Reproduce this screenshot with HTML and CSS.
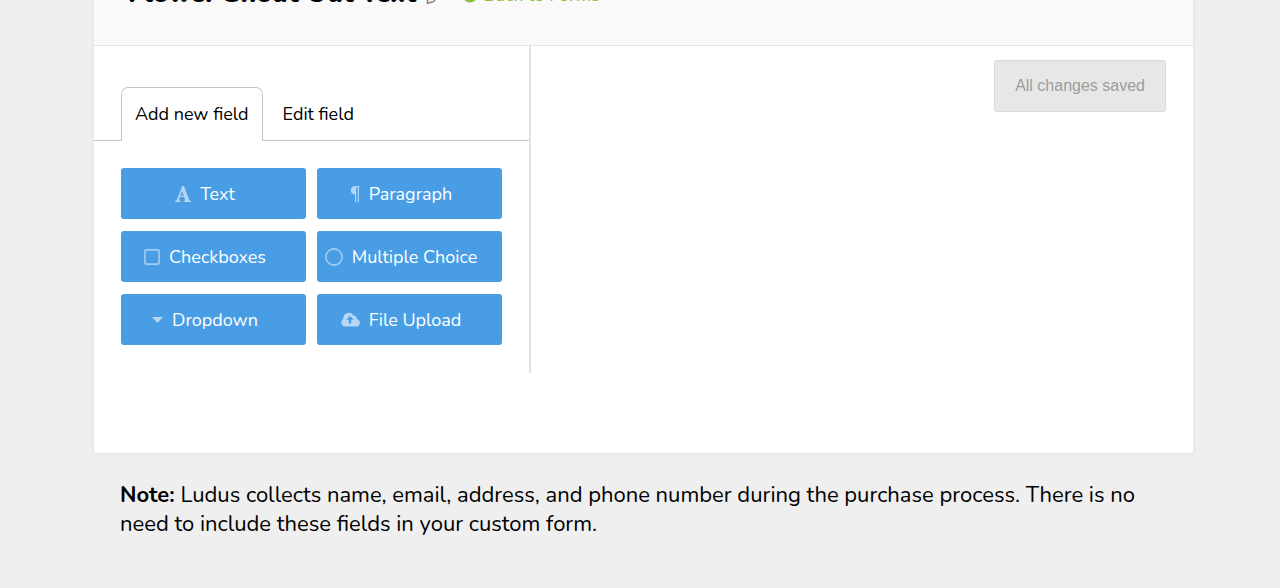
FILE: index.html
```html
<!DOCTYPE html>
<html lang="en">
<head>
<meta charset="utf-8">
<title>Flower Shout Out Text</title>
<link rel="stylesheet" href="styles.css">
</head>
<body>
<main class="page">
  <section class="card">
    <header class="card-header">
      <h1 class="title">Flower Shout Out Text</h1>
      <button class="edit" type="button" aria-label="Rename form">
        <svg width="12" height="18" viewBox="0 0 12 18"><path d="M2.500 16.200V8L8 2l2.500 2v7q0 2.500-2.500 3.700zM4.500 13l4-3.500" fill="none" stroke="#888" stroke-width="1.500"/></svg>
      </button>
      <a class="back" href="#">
        <svg width="16" height="16" viewBox="0 0 16 16"><circle cx="8" cy="8" r="7.500" fill="#8cc03c"/><path d="M9.500 4.500 6 8l3.500 3.500" fill="none" stroke="#fff" stroke-width="2"/></svg>
        Back to Forms
      </a>
    </header>
    <div class="builder">
      <div class="fields">
        <nav class="tabs">
          <a class="tab tab-active" href="#">Add new field</a>
          <a class="tab" href="#">Edit field</a>
        </nav>
        <div class="field-grid">
          <button class="field" type="button"><svg class="icon" width="16" height="16" viewBox="0 0 16 16"><path fill-rule="evenodd" d="M7.300 0h1.700l5 13.600q.4 1.200 2 1.400v1H8.500v-1q2-.1 1.500-1.600L9.200 11H4.900l-.7 2q-.7 1.900 1.500 2v1H0v-1q1.500-.2 2.100-1.700zM5.300 9.800h3.500L7 4.800z"/></svg>Text</button>
          <button class="field" type="button"><svg class="icon" width="10" height="18" viewBox="0 0 10 18"><path d="M9.500 1H5a4.200 4.200 0 0 0 0 8.500V17h1.200V2.200h1.500V17h1.200V2.200h.6z"/></svg>Paragraph</button>
          <button class="field" type="button"><svg class="icon" width="16" height="16" viewBox="0 0 16 16"><rect class="line" x=".9" y=".9" width="14.200" height="14.200" rx="1.500"/></svg>Checkboxes</button>
          <button class="field" type="button"><svg class="icon" width="18" height="18" viewBox="0 0 18 18"><circle class="line" cx="9" cy="9" r="8.100"/></svg>Multiple Choice</button>
          <button class="field" type="button"><svg class="icon" width="11" height="6" viewBox="0 0 11 6"><path d="M0 0h11L5.500 6z"/></svg>Dropdown</button>
          <button class="field" type="button"><svg class="icon" width="19" height="15" viewBox="0 0 19 15"><path fill-rule="evenodd" d="M4.300 14.500A4.200 4.200 0 0 1 2.600 6.600 5.200 5.200 0 0 1 12.500 3.800 2.900 2.900 0 0 1 15.800 7a3.800 3.800 0 0 1-.9 7.500zM9 4 5.300 7.800H7.800v3.600h2.400V7.800h2.500z"/></svg>File Upload</button>
        </div>
      </div>
      <div class="preview">
        <button class="saved" type="button" disabled>All changes saved</button>
      </div>
    </div>
  </section>
  <p class="note"><strong>Note:</strong> Ludus collects name, email, address, and phone number during the purchase process. There is no need to include these fields in your custom form.</p>
</main>
</body>
</html>
```
FILE: styles.css
```css
* { box-sizing: border-box; }
body {
  margin: 0;
  background: #efefef;
  color: #000;
  font-family: Nunito, Lato, sans-serif;
  font-size: 18px;
}
.page {
  margin-top: -40px;
  padding: 0 87px 0 94px;
}
.card {
  background: #fff;
  border-radius: 3px;
  box-shadow: 0 0 2px 2px #e7e8e9;
  padding-bottom: 80px;
}
.card-header {
  display: flex;
  align-items: flex-start;
  height: 86px;
  padding: 17px 34px 0;
  background: #f9f9f9;
  border-bottom: 1px solid #e2e4e6;
}
.title {
  margin: 0;
  font-size: 26px;
  line-height: 34px;
  font-weight: 900;
}
.edit {
  margin: 10px 0 0 9px;
  padding: 0;
  border: 0;
  background: none;
  line-height: 0;
}
.back {
  display: flex;
  align-items: center;
  gap: 5px;
  margin: 6px 0 0 25px;
  color: #8cc03c;
  font-weight: 600;
  line-height: 24px;
  text-decoration: none;
}
.builder { display: flex; align-items: flex-start; }
.fields {
  flex: 0 0 437px;
  padding: 41px 0 28px;
  border-right: 2px solid #e3e3e3;
}
.tabs {
  display: flex;
  gap: 6px;
  padding-left: 27px;
  border-bottom: 1px solid #c4c6c8;
}
.tab {
  padding: 13px;
  border: 1px solid transparent;
  border-bottom: 0;
  color: #000;
  line-height: 26px;
  text-decoration: none;
}
.tab-active {
  margin-bottom: -1px;
  padding-bottom: 14px;
  border-color: #c4c6c8;
  border-radius: 7px 7px 0 0;
  background: #fff;
}
.field-grid {
  display: grid;
  grid-template-columns: 1fr 1fr;
  gap: 12px 11px;
  padding: 27px 27px 0;
}
.field {
  display: flex;
  align-items: center;
  justify-content: center;
  gap: 9px;
  height: 51px;
  padding: 0 17px 0 0;
  border: 0;
  border-radius: 3px;
  background: #489de5;
  color: #fff;
  font: inherit;
  white-space: nowrap;
}
.icon { fill: #b5d7f5; }
.line { fill: none; stroke: #a4cef3; stroke-width: 1.6; }
.preview {
  flex: 1;
  display: flex;
  justify-content: flex-end;
  padding: 14px 27px 0;
}
.saved {
  height: 52px;
  padding: 0 20px;
  border: 1px solid #d9d9d9;
  border-radius: 3px;
  background: #e7e7e7;
  color: #9c9c9c;
  font: 16px "Liberation Sans", Arial, sans-serif;
}
.note {
  margin: 28px 0 0;
  padding: 0 26px;
  font-size: 22px;
  line-height: 29px;
}
```
